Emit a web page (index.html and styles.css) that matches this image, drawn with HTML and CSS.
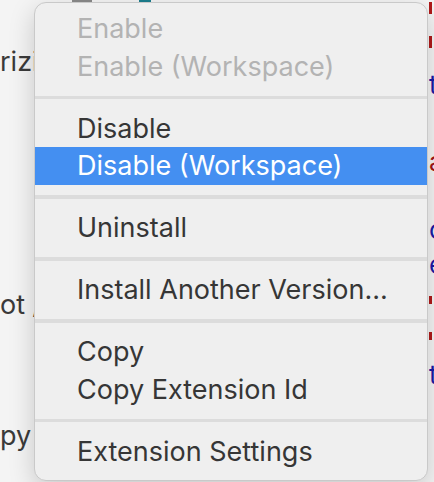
FILE: index.html
```html
<!DOCTYPE html>
<html lang="en">
<head>
    <meta charset="UTF-8">
    <meta name="viewport" content="width=device-width, initial-scale=1.0">
    <title>Extension menu</title>
    <link rel="stylesheet" href="styles.css">
</head>
<body>
    <div class="page">
        <div class="side-left">
            <div class="line line-1">rizing</div>
            <div class="line line-2">ot / Reports</div>
            <div class="line line-3">py Id</div>
        </div>
        <div class="middle">
            <div class="top-strip">
                <span class="cell grey"></span>
                <span class="cell teal"></span>
            </div>
        </div>
        <div class="side-right">
            <div class="mark red m1"></div>
            <div class="mark red m2"></div>
            <div class="code blue c1">t</div>
            <div class="code red c2">a</div>
            <div class="code blue c3">c</div>
            <div class="code blue c4">e</div>
            <div class="mark red m3"></div>
            <div class="mark red m4"></div>
            <div class="code blue c5">t</div>
        </div>
    </div>

    <div class="menu">
        <div class="item disabled">Enable</div>
        <div class="item disabled">Enable (Workspace)</div>
        <div class="separator"></div>
        <div class="item">Disable</div>
        <div class="item active">Disable (Workspace)</div>
        <div class="separator"></div>
        <div class="item">Uninstall</div>
        <div class="separator"></div>
        <div class="item">Install Another Version...</div>
        <div class="separator"></div>
        <div class="item">Copy</div>
        <div class="item">Copy Extension Id</div>
        <div class="separator"></div>
        <div class="item">Extension Settings</div>
    </div>
</body>
</html>
```

FILE: styles.css
```css
body {
    margin: 0;
    background-color: #f4f4f4;
    font-family: Inter, "Noto Sans", sans-serif;
    overflow: hidden;
}
.page {
    display: grid;
    grid-template-columns: 34px 394px 1fr;
    height: 482px;
}
.side-left {
    overflow: hidden;
    color: #3a3a3a;
    font-size: 27px;
    white-space: nowrap;
}
.side-left .line {
    height: 30px;
    line-height: 30px;
}
.line-1 {
    margin-top: 47px;
}
.line-2 {
    margin-top: 213px;
}
.line-3 {
    margin-top: 101px;
}
.middle {
    overflow: hidden;
}
.top-strip {
    display: flex;
    height: 3px;
}
.cell {
    display: block;
    height: 3px;
}
.cell.grey {
    width: 20px;
    margin-left: 38px;
    background-color: #8a8a8a;
}
.cell.teal {
    width: 12px;
    margin-left: 47px;
    background-color: #1d7f8f;
}
.side-right {
    overflow: hidden;
    padding-left: 1px;
    font-size: 26px;
}
.mark {
    width: 3px;
    height: 12px;
}
.code {
    height: 30px;
    line-height: 30px;
}
.blue {
    color: #1a1aa6;
}
.red {
    color: #a31515;
}
.mark.red {
    background-color: #b01a1a;
}
.m1 {
    margin-top: 2px;
}
.m2 {
    margin-top: 22px;
}
.c1 {
    margin-top: 22px;
}
.c2 {
    margin-top: 47px;
}
.c3 {
    margin-top: 38px;
}
.c4 {
    margin-top: 5px;
}
.m3 {
    margin-top: 16px;
    height: 8px;
}
.m4 {
    margin-top: 28px;
    height: 8px;
}
.c5 {
    margin-top: 20px;
}
.menu {
    position: absolute;
    left: 34px;
    top: 2px;
    width: 392px;
    padding: 7px 0 10px;
    background-color: #efefef;
    border: 1px solid #c9c9c9;
    border-radius: 12px;
    box-shadow: 0 8px 26px rgba(0, 0, 0, 0.18);
}
.item {
    height: 37.5px;
    line-height: 37.5px;
    padding-left: 42px;
    font-size: 27px;
    color: #363636;
    white-space: nowrap;
}
.item.disabled {
    color: #b3b3b3;
}
.item.active {
    background-color: #448ff1;
    color: white;
}
.separator {
    height: 3.5px;
    margin: 10.5px 0;
    background-color: #dcdcdc;
}
```
